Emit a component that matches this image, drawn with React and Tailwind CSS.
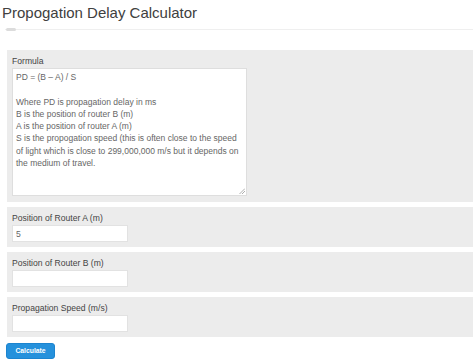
import React from "react";

const font = { fontFamily: '"Liberation Sans", Arial, sans-serif' };

function Field({ label, value }) {
  return (
    <div className="bg-[#ececec] px-[5px] pt-[5px] pb-[5px] flex flex-col gap-[1px]">
      <div className="text-[8.6px] leading-[12px] text-[#444]">{label}</div>
      <input
        readOnly
        value={value}
        className="w-[116px] h-[17px] bg-white border border-[#e2e2e2] px-[3px] text-[8.6px] text-[#666] outline-none"
      />
    </div>
  );
}

export default function App() {
  return (
    <div className="w-[474px] h-[362px] bg-white overflow-hidden" style={font}>
      <div className="pl-[2px] pt-[3px] h-[29px] text-[15px] leading-[20px] text-[#404040]">
        Propogation Delay Calculator
      </div>
      <div className="relative ml-[5px] mr-[1px] h-[1px] bg-[#efefef]">
        <div className="absolute left-[1px] top-[-1px] w-[10px] h-[3px] rounded-full bg-[#dcdcdc]" />
      </div>
      <div className="mt-[20px] ml-[7px] mr-[1px] flex flex-col gap-[5px]">
        <div className="bg-[#ececec] px-[5px] pt-[5px] pb-[6px] flex flex-col gap-[1px]">
          <div className="text-[8.6px] leading-[12px] text-[#444]">Formula</div>
          <div className="relative w-[235px] h-[128px] bg-white border border-[#dedede] px-[3px] pt-[2px] text-[8.5px] leading-[12.3px] text-[#666]">
            <div>PD = (B – A) / S</div>
            <div>&nbsp;</div>
            <div>Where PD is propagation delay in ms</div>
            <div>B is the position of router B (m)</div>
            <div>A is the position of router A (m)</div>
            <div>S is the propogation speed (this is often close to the speed</div>
            <div>of light which is close to 299,000,000 m/s but it depends on</div>
            <div>the medium of travel.</div>
            <svg className="absolute right-[1px] bottom-[1px]" width="6" height="6" viewBox="0 0 6 6">
              <line x1="6" y1="0.5" x2="0.5" y2="6" stroke="#999" strokeWidth="0.8" />
              <line x1="6" y1="3" x2="3" y2="6" stroke="#999" strokeWidth="0.8" />
            </svg>
          </div>
        </div>
        <Field label="Position of Router A (m)" value="5" />
        <Field label="Position of Router B (m)" value="" />
        <Field label="Propagation Speed (m/s)" value="" />
      </div>
      <div className="mt-[6px] ml-[6px]">
        <button className="w-[49px] h-[16px] rounded-[3px] bg-[#2591dc] border border-[#1c84cf] text-white text-[6.8px] font-bold flex items-center justify-center">
          Calculate
        </button>
      </div>
    </div>
  );
}
